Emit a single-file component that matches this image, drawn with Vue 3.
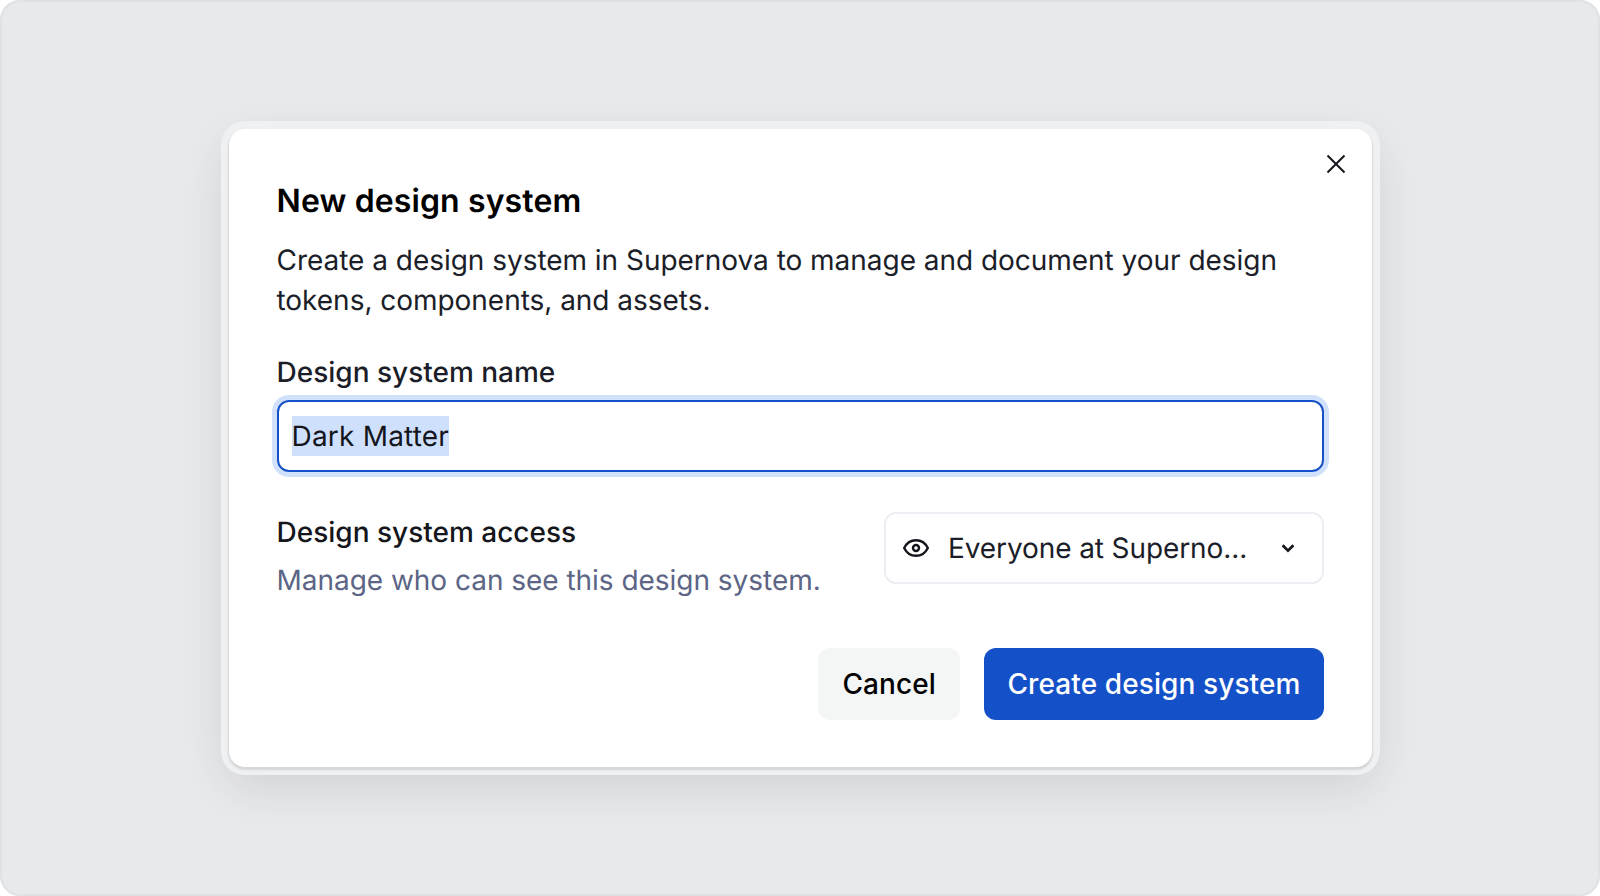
<template>
  <div class="page">
    <div class="dialog">
      <button class="close" aria-label="Close">
        <svg width="24" height="24" viewBox="0 0 24 24" fill="none" stroke="#14161c" stroke-width="2">
          <path d="M3.5 3.5L20.5 20.5M20.5 3.5L3.5 20.5" />
        </svg>
      </button>
      <h1 class="title">New design system</h1>
      <p class="desc">
        Create a design system in Supernova to manage and document your design tokens, components, and assets.
      </p>
      <label class="field-label">Design system name</label>
      <div class="input">
        <span class="selected">{{ name }}</span>
      </div>
      <div class="access">
        <div class="access-text">
          <div class="access-title">Design system access</div>
          <div class="access-hint">Manage who can see this design system.</div>
        </div>
        <div class="select">
          <svg class="eye" width="28" height="28" viewBox="0 0 28 28" fill="none" stroke="#14161c" stroke-width="2.4">
            <path d="M2.2 14C4.8 8.6 9 6.2 14 6.2S23.2 8.6 25.8 14C23.2 19.4 19 21.8 14 21.8S4.8 19.4 2.2 14Z" />
            <circle cx="14" cy="14" r="3" />
          </svg>
          <span class="select-text">{{ access }}</span>
          <svg class="chevron" width="20" height="20" viewBox="0 0 20 20" fill="none" stroke="#14161c" stroke-width="2.7">
            <path d="M4.6 7.3L10 12.7L15.4 7.3" />
          </svg>
        </div>
      </div>
      <div class="actions">
        <button class="btn btn-cancel">Cancel</button>
        <button class="btn btn-primary">Create design system</button>
      </div>
    </div>
  </div>
</template>

<script setup>
const name = "Dark Matter";
const access = "Everyone at Superno...";
</script>

<style>
html,
body {
  margin: 0;
}
</style>

<style scoped>
.page {
  box-sizing: border-box;
  width: 1600px;
  height: 896px;
  display: flex;
  align-items: center;
  justify-content: center;
  background: #e8e9eb;
  border: 2px solid #dfe1e7;
  border-radius: 20px;
  font-family: Inter, "Liberation Sans", sans-serif;
  text-rendering: geometricPrecision;
}

.dialog {
  position: relative;
  box-sizing: border-box;
  width: 1143px;
  height: 638px;
  padding: 52px 48px 0;
  background: #fff;
  border-radius: 16px;
  box-shadow: 0 2px 2px 1px rgba(30, 34, 44, 0.12), 0 0 0 8px #eff0f1, 0 16px 48px rgba(40, 44, 56, 0.14);
}

.close {
  position: absolute;
  top: 23px;
  right: 24px;
  width: 24px;
  height: 24px;
  padding: 0;
  border: 0;
  background: none;
}

.close svg {
  display: block;
}

.title {
  margin: 0;
  font-size: 32px;
  line-height: 40px;
  font-weight: 600;
  letter-spacing: 0.12px;
  color: #000;
}

.desc {
  margin: 19px 0 0;
  font-size: 28px;
  line-height: 40px;
  letter-spacing: -0.03px;
  color: #1b1e28;
}

.field-label {
  display: block;
  margin-top: 32px;
  font-size: 28px;
  line-height: 40px;
  font-weight: 450;
  color: #1b1e28;
}

.input {
  box-sizing: border-box;
  height: 72px;
  margin-top: 8px;
  padding: 0 13px;
  display: flex;
  align-items: center;
  border: 2px solid #1450c8;
  border-radius: 12px;
  box-shadow: 0 0 0 5px #d2e1fb;
  font-size: 28px;
  letter-spacing: 0.2px;
  color: #14161c;
}

.selected {
  line-height: 40px;
  background: #cfe0fd;
}

.access {
  display: flex;
  justify-content: space-between;
  margin-top: 40px;
}

.access-title {
  font-size: 28px;
  line-height: 40px;
  font-weight: 450;
  color: #14161c;
}

.access-hint {
  margin-top: 8px;
  font-size: 28px;
  line-height: 40px;
  letter-spacing: -0.03px;
  color: #5c6585;
}

.select {
  box-sizing: border-box;
  width: 440px;
  height: 72px;
  padding: 0 24px 0 16px;
  display: flex;
  align-items: center;
  border: 2px solid #eceef3;
  border-radius: 12px;
  font-size: 28px;
  letter-spacing: -0.1px;
  color: #1b1e28;
}

.select-text {
  margin-left: 18.5px;
  white-space: nowrap;
}

.chevron {
  margin-left: auto;
}

.actions {
  display: flex;
  justify-content: flex-end;
  gap: 24px;
  margin-top: 48px;
}

.btn {
  height: 72px;
  border: 0;
  border-radius: 12px;
  font-family: inherit;
  font-size: 28px;
  font-weight: 450;
  letter-spacing: 0.1px;
}

.btn-cancel {
  padding: 0 24.5px;
  background: #f4f5f5;
  color: #000;
}

.btn-primary {
  padding: 0 23px;
  background: #1450c8;
  color: #fff;
}
</style>
